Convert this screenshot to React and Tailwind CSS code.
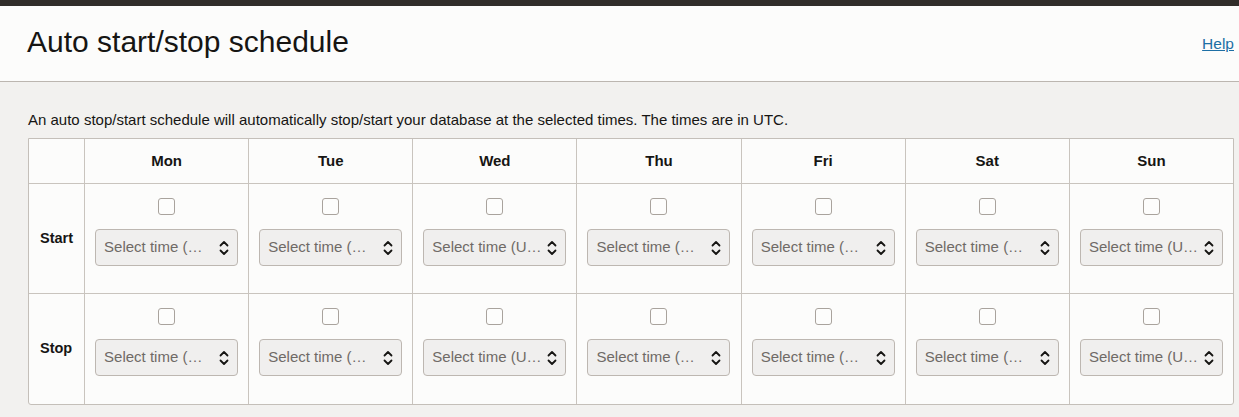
const days = ["Mon", "Tue", "Wed", "Thu", "Fri", "Sat", "Sun"];
const labels = {
  Mon: "Select time (…",
  Tue: "Select time (…",
  Wed: "Select time (U…",
  Thu: "Select time (…",
  Fri: "Select time (…",
  Sat: "Select time (…",
  Sun: "Select time (U…",
};

const Chevrons = () => (
  <svg width="10" height="16" viewBox="0 0 10 16" fill="none" stroke="#161513" strokeWidth="1.8" strokeLinecap="round" strokeLinejoin="round">
    <path d="M1.5 5.5 L5 2 L8.5 5.5" />
    <path d="M1.5 10.5 L5 14 L8.5 10.5" />
  </svg>
);

const TimeCell = ({ day }) => (
  <div className="flex flex-col items-center border-l border-[#c9c4be] pt-[14px]">
    <div className="w-[17px] h-[17px] rounded-[3px] border border-[#a9a39d] bg-[#fdfdfc]" />
    <div className="mt-[14px] flex items-center justify-between w-[143px] h-[37px] rounded-[4px] border border-[#bdb7b1] bg-[#f0efee] pl-[8px] pr-[8px]">
      <span className="text-[15px] text-[#6f6a66] whitespace-nowrap">{labels[day]}</span>
      <Chevrons />
    </div>
  </div>
);

const ScheduleRow = ({ label, last }) => (
  <div className={`grid grid-cols-[55px_repeat(7,1fr)] h-[110px] ${last ? "" : "border-b border-[#c9c4be]"}`}>
    <div className="flex items-center pl-[11px] text-[14.5px] font-bold text-[#161513]">{label}</div>
    {days.map((d) => (
      <TimeCell key={d} day={d} />
    ))}
  </div>
);

const App = () => {
  return (
    <div className="min-h-[417px] bg-[#f2f1ef]" style={{ fontFamily: '"Liberation Sans", Arial, sans-serif' }}>
      <div className="h-[6px] bg-[#312d2a]" />
      <div className="flex items-center justify-between h-[76px] bg-[#fcfcfb] border-b border-[#bcb6b0] pl-[27px] pr-[5px]">
        <h1 className="text-[30px] text-[#161513] leading-none pb-[3px]">Auto start/stop schedule</h1>
        <a href="#" className="text-[15.5px] text-[#1d6fa5] underline">
          Help
        </a>
      </div>
      <div className="px-[28px] pt-[29px] pb-[13px]">
        <p className="text-[15px] text-[#161513] leading-[18px] mb-[9px]">
          An auto stop/start schedule will automatically stop/start your database at the selected times. The times are in UTC.
        </p>
        <div className="w-[1206px] border border-[#c4bfb9] rounded-b-[3px] bg-[#fcfcfb]">
          <div className="grid grid-cols-[55px_repeat(7,1fr)] h-[45px] border-b border-[#c9c4be]">
            <div />
            {days.map((d) => (
              <div key={d} className="flex items-center justify-center border-l border-[#c9c4be] text-[15px] font-bold text-[#161513]">
                {d}
              </div>
            ))}
          </div>
          <ScheduleRow label="Start" />
          <ScheduleRow label="Stop" last />
        </div>
      </div>
    </div>
  );
};

export default App;
